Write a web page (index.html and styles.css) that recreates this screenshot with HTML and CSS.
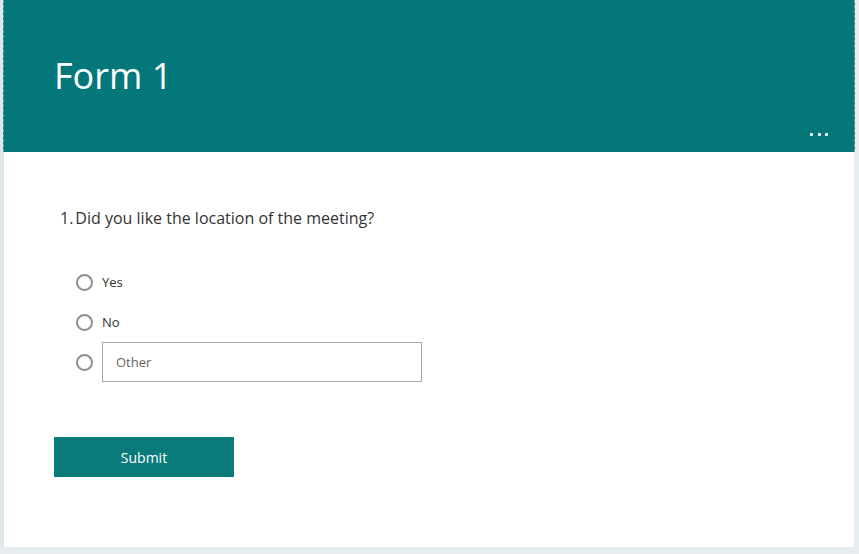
FILE: index.html
```html
<!DOCTYPE html>
<html lang="en">
<head>
<meta charset="utf-8">
<title>Form 1</title>
<link rel="stylesheet" href="styles.css">
</head>
<body>
<div class="page">
  <div class="card">
    <header class="banner">
      <h1 class="title">Form 1</h1>
      <div class="more" aria-label="More options"><span></span><span></span><span></span></div>
    </header>
    <main class="body">
      <div class="question">
        <span class="qnum">1.</span><span class="qtext">Did you like the location of the meeting?</span>
      </div>
      <div class="choices">
        <label class="choice"><span class="radio"></span><span class="label">Yes</span></label>
        <label class="choice"><span class="radio"></span><span class="label">No</span></label>
        <label class="choice"><span class="radio"></span><span class="other">Other</span></label>
      </div>
      <button class="submit" type="button">Submit</button>
    </main>
  </div>
</div>
</body>
</html>
```
FILE: styles.css
```css
html, body {
  margin: 0;
  padding: 0;
  height: 100%;
}
body {
  background: #e7edef;
  font-family: "Open Sans", "Noto Sans", "Liberation Sans", sans-serif;
  color: #323130;
}
.page {
  padding-left: 4px;
  width: 850px;
  background: linear-gradient(to right, #dfe6e9 0, #dfe6e9 4px, transparent 4px);
}
.card {
  background: #ffffff;
  height: 547px;
  display: flex;
  flex-direction: column;
}
.banner {
  height: 152px;
  background: #04777b;
  box-sizing: border-box;
  border-left: 1px dashed #8a9a9c;
  margin-left: -1px;
  border-right: 1px dashed #8a9a9c;
  margin-right: -1px;
  position: relative;
  display: flex;
  align-items: flex-start;
}
.title {
  margin: 52px 0 0 50px;
  font-weight: 400;
  font-size: 36px;
  line-height: 48px;
  color: #ffffff;
}
.more {
  position: absolute;
  right: 26px;
  top: 133px;
  display: flex;
  gap: 4.5px;
}
.more span {
  width: 3px;
  height: 3px;
  background: #ffffff;
  border-radius: 1px;
}
.body {
  padding: 54px 0 0 50px;
  display: flex;
  flex-direction: column;
  align-items: flex-start;
}
.question {
  font-size: 16px;
  line-height: 24px;
  color: #333333;
  padding-left: 6px;
  display: flex;
}
.qnum {
  margin-right: 2px;
}
.choices {
  margin-top: 42px;
  padding-left: 22px;
  display: flex;
  flex-direction: column;
  gap: 20px;
}
.choice {
  display: flex;
  align-items: center;
  height: 20px;
}
.radio {
  width: 13px;
  height: 13px;
  border: 2px solid #8f8d8c;
  border-radius: 50%;
  margin-right: 9px;
  flex: none;
}
.label {
  font-size: 13px;
  color: #323130;
}
.other {
  box-sizing: border-box;
  width: 320px;
  height: 40px;
  border: 1px solid #a6a6a6;
  font-size: 13px;
  color: #666666;
  padding-left: 13px;
  display: flex;
  align-items: center;
}
.submit {
  margin-top: 65px;
  width: 180px;
  height: 40px;
  border: none;
  background: #0b7a7b;
  color: #ffffff;
  font-family: inherit;
  font-size: 14px;
  padding: 0;
}
```
